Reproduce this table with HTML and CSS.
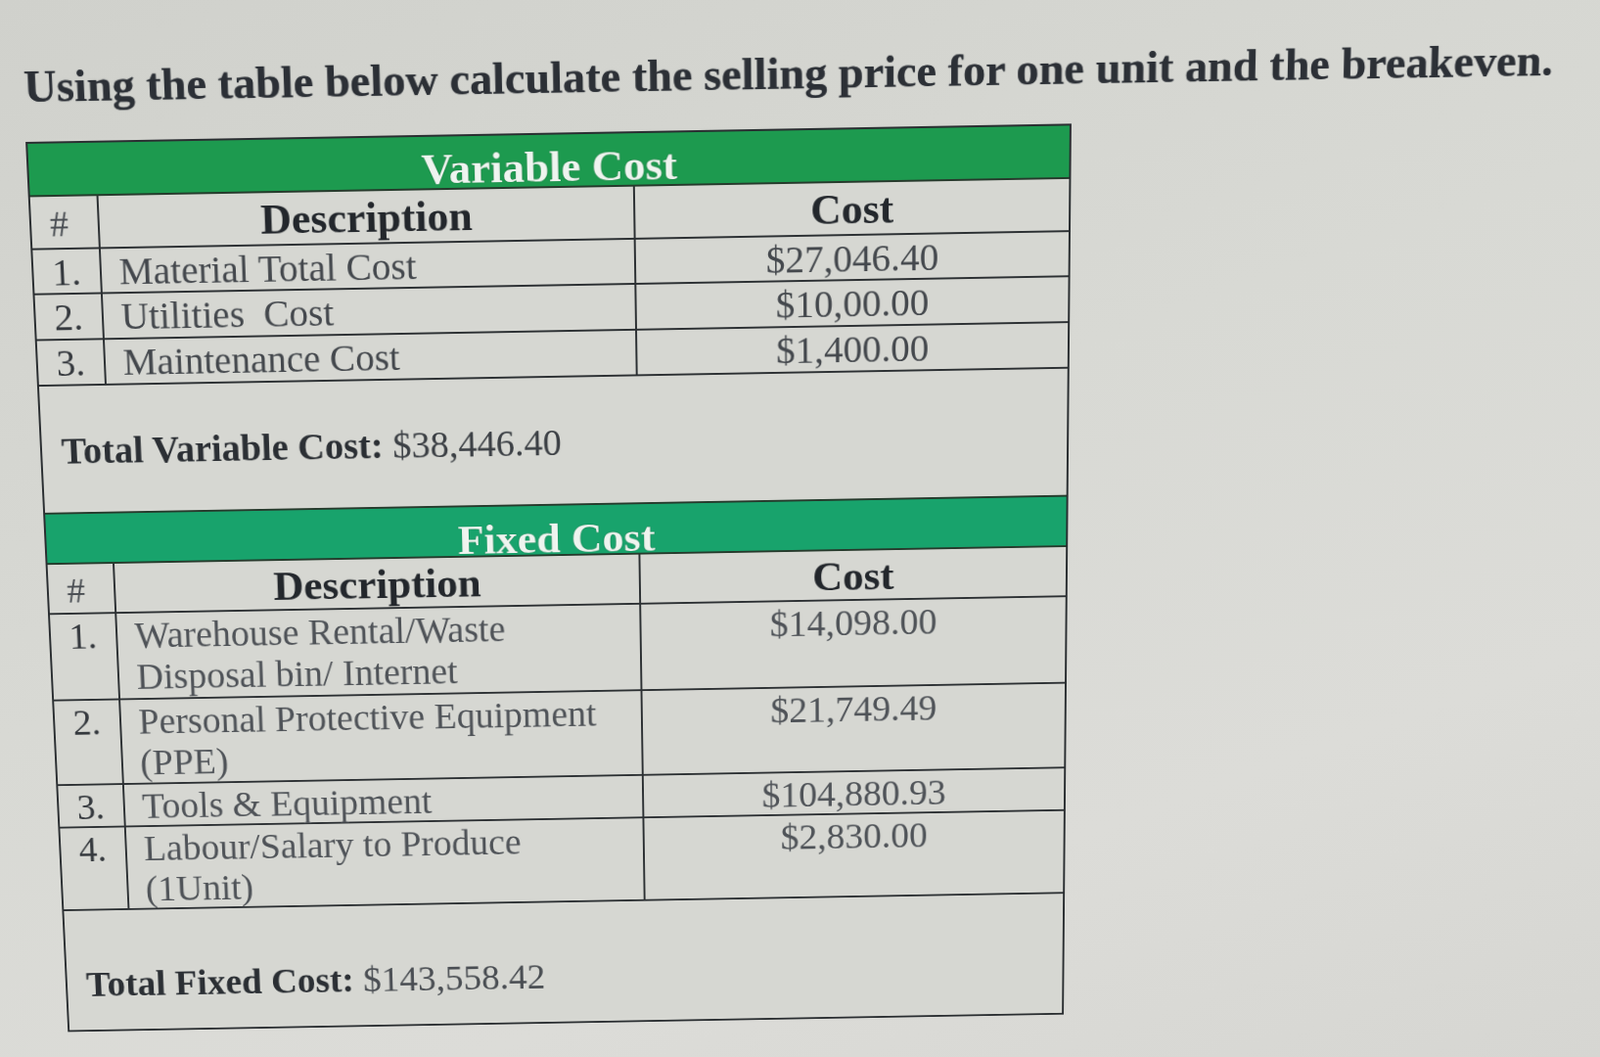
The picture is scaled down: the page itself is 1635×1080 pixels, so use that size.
FILE: index.html
```html
<!DOCTYPE html>
<html lang="en">
<head>
<meta charset="utf-8">
<title>Variable and Fixed Cost</title>
<link rel="stylesheet" href="styles.css">
</head>
<body>
<div class="sheet">
  <h1 class="title">Using the table below calculate the selling price for one unit and the breakeven.</h1>
  <div class="frame">
    <div class="band band-var">Variable Cost</div>
    <div class="row head h-var">
      <div class="c num hash">#</div>
      <div class="c desc">Description</div>
      <div class="c cost">Cost</div>
    </div>
    <div class="row vr1">
      <div class="c num">1.</div>
      <div class="c desc">Material Total Cost</div>
      <div class="c cost">$27,046.40</div>
    </div>
    <div class="row vr2">
      <div class="c num">2.</div>
      <div class="c desc">Utilities&nbsp; Cost</div>
      <div class="c cost">$10,00.00</div>
    </div>
    <div class="row vr3">
      <div class="c num">3.</div>
      <div class="c desc">Maintenance Cost</div>
      <div class="c cost">$1,400.00</div>
    </div>
    <div class="total t-var"><span class="lbl">Total Variable Cost:</span> $38,446.40</div>

    <div class="band band-fix">Fixed Cost</div>
    <div class="row head h-fix">
      <div class="c num hash">#</div>
      <div class="c desc">Description</div>
      <div class="c cost">Cost</div>
    </div>
    <div class="row fixed fr1">
      <div class="c num">1.</div>
      <div class="c desc">Warehouse Rental/Waste<br>Disposal bin/ Internet</div>
      <div class="c cost">$14,098.00</div>
    </div>
    <div class="row fixed fr2">
      <div class="c num">2.</div>
      <div class="c desc">Personal Protective Equipment<br>(PPE)</div>
      <div class="c cost">$21,749.49</div>
    </div>
    <div class="row fixed fr3">
      <div class="c num">3.</div>
      <div class="c desc">Tools &amp; Equipment</div>
      <div class="c cost">$104,880.93</div>
    </div>
    <div class="row fixed fr4">
      <div class="c num">4.</div>
      <div class="c desc">Labour/Salary to Produce<br>(1Unit)</div>
      <div class="c cost">$2,830.00</div>
    </div>
    <div class="total t-fix"><span class="lbl">Total Fixed Cost:</span> $143,558.42</div>
  </div>
</div>
</body>
</html>
```

FILE: styles.css
```css
html, body {
  margin: 0;
  padding: 0;
}

body {
  width: 1635px;
  height: 1080px;
  overflow: hidden;
  background: linear-gradient(160deg, #d0d1cc 0%, #d8d9d4 45%, #dcdcd8 75%, #d6d6d2 100%);
  font-family: "Liberation Serif", "Times New Roman", serif;
  color: #44484d;
}

.sheet {
  width: 1635px;
  padding-top: 52px;
  transform-origin: 598px 135px;
  transform: rotate(-1deg) perspective(2000px) rotateX(-6deg);
  filter: blur(0.5px);
}

.title {
  margin: 0 0 29px 27px;
  font-size: 46.2px;
  line-height: 54px;
  font-weight: bold;
  color: #2c3036;
  white-space: nowrap;
  text-shadow: 0 0 1px rgba(30, 35, 45, 0.6);
}

.frame {
  box-sizing: border-box;
  margin-left: 26px;
  width: 1069px;
  border: 2px solid #2a2e31;
  background: #d6d7d2;
}

.band {
  box-sizing: border-box;
  border-bottom: 2px solid #263a2c;
  color: #eef4ef;
  font-weight: bold;
  font-size: 45px;
  line-height: 50px;
  text-align: center;
  text-shadow: 0 0 1px rgba(20, 60, 30, 0.8);
}

.band-var {
  height: 55px;
  padding-top: 8px;
  background: #1d9a4f;
}

.band-fix {
  height: 54px;
  padding-top: 10px;
  background: #18a36c;
}

.row {
  box-sizing: border-box;
  display: grid;
  grid-template-columns: 70px 550px 1fr;
  border-bottom: 2px solid #2c3033;
  font-size: 39.5px;
  line-height: 44px;
}

.c {
  box-sizing: border-box;
  padding-top: 2px;
}

.num {
  padding-left: 19px;
  border-right: 2px solid #2c3033;
  color: #35393e;
}

.desc {
  padding-left: 18px;
  border-right: 2px solid #2c3033;
}

.cost {
  text-align: center;
}

.head {
  line-height: 50px;
}

.head .c {
  padding-top: 3px;
}

.head .desc,
.head .cost {
  font-size: 44px;
  font-weight: bold;
  color: #23272c;
  text-align: center;
  padding-left: 0;
}

.hash {
  font-size: 38px;
  color: #4a4e53;
}

.h-var { height: 55px; }
.vr1 { height: 47px; }
.vr2 { height: 48px; }
.vr3 { height: 48px; }

.h-fix { height: 54px; }

.fixed {
  font-size: 39px;
  line-height: 45px;
}

.fixed .c {
  padding-top: 1px;
}

.fixed .desc,
.fixed .cost {
  color: #4f5358;
}

.fr1 { height: 94px; }
.fr2 { height: 93px; }
.fr3 { height: 47px; }
.fr4 { height: 92px; }

.total {
  box-sizing: border-box;
  padding-left: 20px;
  font-size: 39px;
  line-height: 42px;
  color: #3c4045;
}

.lbl {
  font-weight: bold;
  color: #2b2f34;
}

.t-var {
  height: 136px;
  padding-top: 48px;
  border-bottom: 2px solid #263a2c;
}

.t-fix {
  height: 134px;
  padding-top: 62px;
  color: #4a4e53;
}
```
